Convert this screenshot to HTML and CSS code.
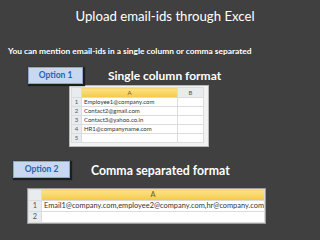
FILE: index.html
```html
<!DOCTYPE html>
<html lang="en">
<head>
    <meta charset="UTF-8">
    <meta name="viewport" content="width=device-width, initial-scale=1.0">
    <title>Upload email-ids through Excel</title>
    <link rel="stylesheet" href="styles.css">
</head>
<body>
    <h1 class="title">Upload email-ids through Excel</h1>
    <p class="lead">You can mention email-ids in a single column or comma separated</p>

    <div class="option one">
        <div class="option-head">
            <span class="badge">Option 1</span>
            <h2>Single column format</h2>
        </div>
        <div class="sheet">
            <table class="grid">
                <tr class="cols">
                    <th class="corner"></th>
                    <th class="col-a active">A</th>
                    <th class="col-b">B</th>
                </tr>
                <tr><th>1</th><td>Employee1@company.com</td><td></td></tr>
                <tr><th>2</th><td>Contact2@gmail.com</td><td></td></tr>
                <tr><th>3</th><td>Contact3@yahoo.co.in</td><td></td></tr>
                <tr><th>4</th><td>HR1@companyname.com</td><td></td></tr>
                <tr><th>5</th><td></td><td></td></tr>
            </table>
        </div>
    </div>

    <div class="option two">
        <div class="option-head">
            <span class="badge">Option 2</span>
            <h2>Comma separated format</h2>
        </div>
        <div class="sheet">
            <table class="grid">
                <tr class="cols">
                    <th class="corner"></th>
                    <th class="col-a active">A</th>
                </tr>
                <tr><th>1</th><td>Email1@company.com,employee2@company.com,hr@company.com</td></tr>
                <tr><th>2</th><td></td></tr>
            </table>
        </div>
    </div>
</body>
</html>
```

FILE: styles.css
```css
body {
    margin: 0;
    padding: 0;
    font-family: 'Lato', 'Open Sans', sans-serif;
    background-color: #404040;
    color: #ffffff;
    width: 320px;
    height: 240px;
    overflow: hidden;
}
.title {
    margin: 0;
    padding: 7px 0 0 10px;
    font-size: 13.2px;
    font-weight: normal;
    text-align: center;
    line-height: 18px;
}
.lead {
    margin: 20px 0 0 8px;
    font-size: 8.4px;
    font-weight: bold;
    line-height: 12px;
}
.option-head {
    display: flex;
    align-items: center;
}
.option h2 {
    margin: 0;
    font-size: 12px;
    font-weight: bold;
    line-height: 16px;
}
.badge {
    display: block;
    background-color: #c7d8f0;
    color: #1f63b8;
    font-size: 8.5px;
    font-weight: bold;
    text-align: center;
    border: 1px solid #8ea6c8;
    box-shadow: 1px 1px 1px 1px #1e1e1e;
    line-height: 15px;
}
.one {
    margin-top: 10px;
}
.one .option-head {
    padding-left: 28px;
    gap: 25px;
}
.one .badge {
    width: 53px;
}
.one .sheet {
    margin: 1px 0 0 69px;
}
.two {
    margin-top: 13px;
}
.two .option-head {
    padding-left: 13px;
    gap: 21px;
}
.two .badge {
    width: 55px;
}
.two .option-head h2 {
    font-size: 12.3px;
    margin-top: 3px;
}
.two .sheet {
    margin: 9px 0 0 27px;
}
.sheet {
    display: block;
    width: fit-content;
    background-color: #f2f2f2;
    border: 1px solid #b8b8b8;
    padding: 1px 4px 3px 1px;
}
.grid {
    border-collapse: collapse;
    background-color: #ffffff;
    color: #333333;
}
.grid th,
.grid td {
    padding: 0;
    border: 1px solid #dadcdd;
    font-weight: normal;
    white-space: nowrap;
}
.grid th {
    background-color: #e9ecef;
    color: #555555;
    text-align: center;
}
.grid td {
    text-align: left;
    padding-left: 2px;
}
.grid .cols th.active {
    background: linear-gradient(#fbe38a, #f5c945);
    color: #6a5a20;
}
.one .grid {
    font-size: 6px;
}
.one .grid th,
.one .grid td {
    height: 8px;
    line-height: 8px;
}
.one .grid .cols th {
    height: 9px;
}
.one .corner { width: 9px; }
.one .col-a { width: 95px; }
.one .col-b { width: 25px; }
.two .grid {
    font-size: 7.4px;
}
.two .grid th,
.two .grid td {
    height: 10px;
    line-height: 10px;
}
.two .corner { width: 12px; }
.two .col-a { width: 221px; }
.two .sheet {
    padding: 0;
    border-color: #9a9a9a;
}
```
